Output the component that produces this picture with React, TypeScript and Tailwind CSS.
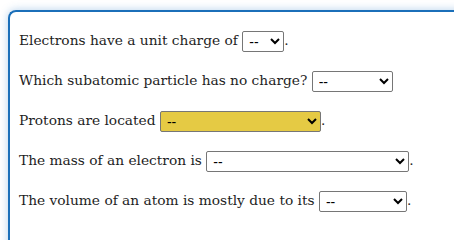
import React from 'react';

const selectBase =
  "h-[21px] border border-[#767676] rounded-[2px] pl-[2px] text-[14px] text-black align-middle [font-family:'Liberation_Sans',Arial,sans-serif]";

export default function App() {
  return (
    <div className="w-[454px] h-[240px] overflow-hidden bg-white pt-[10px] pl-[8px] [font-family:'DejaVu_Serif',Georgia,serif]">
      <div className="w-[480px] h-[260px] border-l-2 border-t-2 border-[#1b6fb9] rounded-tl-lg shadow-[0_0_8px_rgba(40,120,200,0.35)] pl-[9px] pt-[17px] text-[13.75px] text-[#1e1e1e]">
        <div className="flex flex-col gap-[18px]">
          <p className="h-[22px] leading-[22px]">
            Electrons have a unit charge of{' '}
            <select className={`${selectBase} w-[42px] bg-white`}>
              <option>--</option>
            </select>
            .
          </p>
          <p className="h-[22px] leading-[22px]">
            Which subatomic particle has no charge?{' '}
            <select className={`${selectBase} w-[81px] bg-white`}>
              <option>--</option>
            </select>
          </p>
          <p className="h-[22px] leading-[22px]">
            Protons are located{' '}
            <select className={`${selectBase} w-[161px] bg-[#e5ca44]`}>
              <option>--</option>
            </select>
            .
          </p>
          <p className="h-[22px] leading-[22px]">
            The mass of an electron is{' '}
            <select className={`${selectBase} w-[203px] bg-white`}>
              <option>--</option>
            </select>
            .
          </p>
          <p className="h-[22px] leading-[22px]">
            The volume of an atom is mostly due to its{' '}
            <select className={`${selectBase} w-[88px] bg-white`}>
              <option>--</option>
            </select>
            .
          </p>
        </div>
      </div>
    </div>
  );
}
